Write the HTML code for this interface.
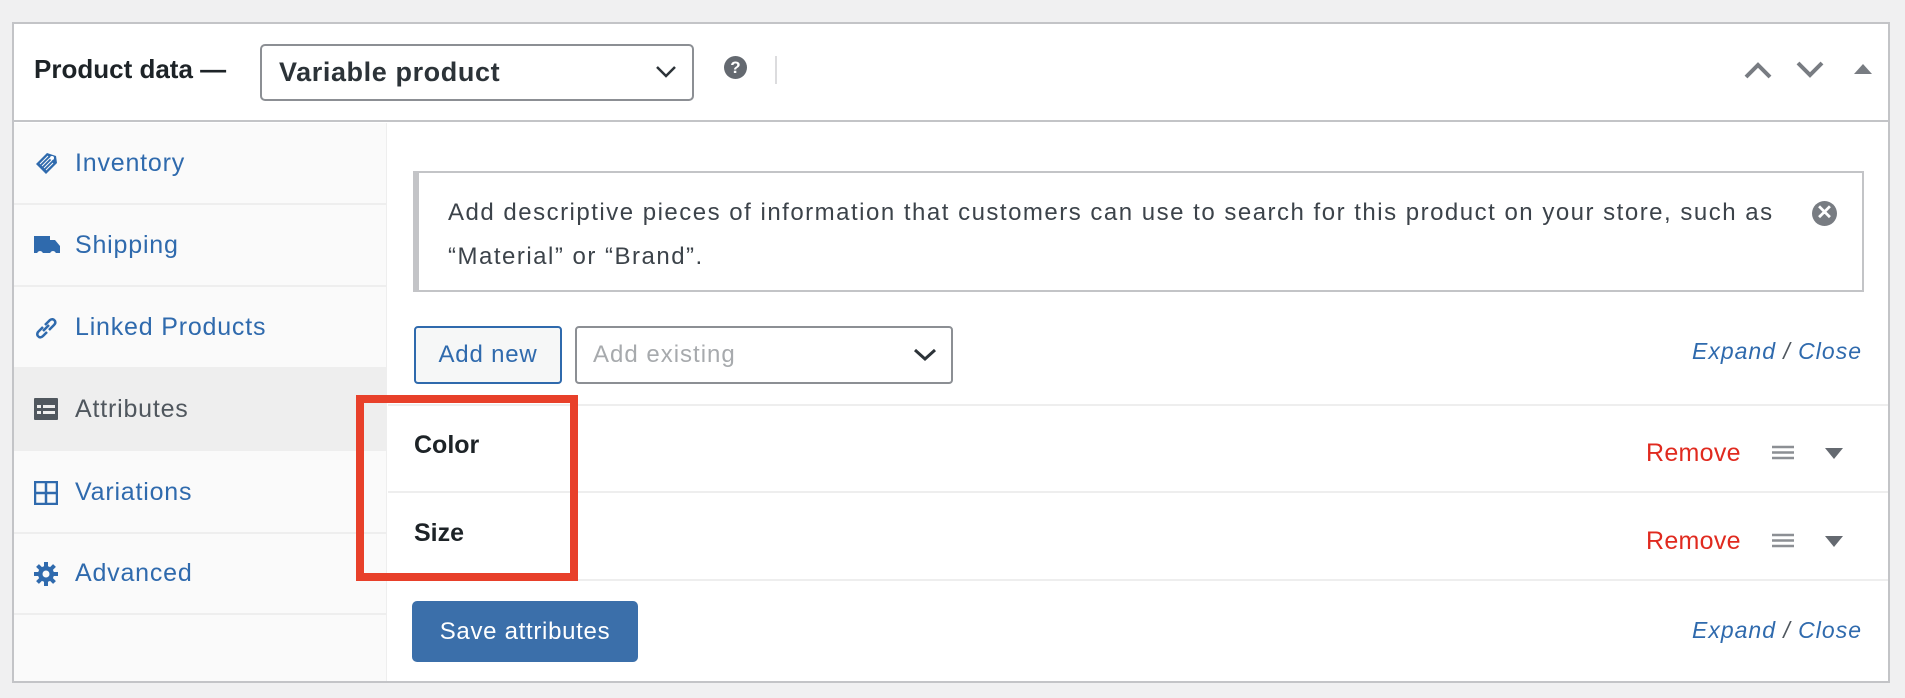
<!DOCTYPE html>
<html><head><meta charset="utf-8"><style>
*{box-sizing:border-box;margin:0;padding:0}
body{width:1905px;height:698px;background:#f0f0f1;font-family:"Liberation Sans",sans-serif;position:relative;overflow:hidden}
.abs{position:absolute}
.panel{left:12px;top:22px;width:1878px;height:661px;background:#fff;border:2px solid #c3c4c7}
.hdr{left:12px;top:22px;width:1878px;height:100px;border-bottom:2px solid #c3c4c7}
.side{left:14px;top:123px;width:373px;height:558px;background:#fafafa;border-right:1px solid #eee}
.row{position:absolute;left:0;width:373px;height:82px;border-bottom:2px solid #eee;color:#2f6aad;font-size:25px;letter-spacing:0.8px}
.row span{position:absolute;left:61px;top:26px}
.row svg{position:absolute;left:20px;top:29px}
.exp{font-style:italic;font-size:23px;color:#2f6aad;letter-spacing:1px}
.exp i{color:#50575e}
.rem{color:#e02a1f;font-size:25px;letter-spacing:0.3px}
</style></head><body>
<div class="abs panel"></div>
<div class="abs hdr"></div>
<div class="abs" style="left:34px;top:54px;font-size:26px;font-weight:bold;color:#1d2327">Product data —</div>
<div class="abs" style="left:260px;top:44px;width:434px;height:57px;border:2px solid #8c8f94;border-radius:5px;background:#fff"></div>
<div class="abs" style="left:279px;top:57px;font-size:27px;font-weight:bold;color:#2c3338;letter-spacing:0.6px">Variable product</div>
<svg class="abs" style="left:655px;top:65px" width="22" height="14"><path d="M2 2 L11 11 L20 2" fill="none" stroke="#2c3338" stroke-width="2.5"/></svg>
<div class="abs" style="left:724px;top:56px;width:23px;height:23px;border-radius:50%;background:#646970;color:#fff;font-weight:bold;font-size:17px;text-align:center;line-height:23px">?</div>
<div class="abs" style="left:775px;top:56px;width:2px;height:28px;background:#dcdcde"></div>
<svg class="abs" style="left:1743px;top:60px" width="30" height="20"><path d="M3 17 L15 5 L27 17" fill="none" stroke="#787c82" stroke-width="4"/></svg>
<svg class="abs" style="left:1795px;top:60px" width="30" height="20"><path d="M3 3 L15 15 L27 3" fill="none" stroke="#787c82" stroke-width="4"/></svg>
<svg class="abs" style="left:1854px;top:63px" width="18" height="12"><path d="M0 11 L9 1 L18 11Z" fill="#787c82"/></svg>

<div class="abs side">
 <div class="row" style="top:0"><svg width="24" height="26" viewBox="0 0 24 26"><path d="M2 12 L13 1 L22 4 L23 11 L12 22Z" fill="#2f6aad"/><path d="M6 12 L14 4 M8 14 L16 6 M10 16 L18 8 M12 18 L19 11" stroke="#fafafa" stroke-width="1"/><circle cx="18" cy="6" r="2" fill="#fff"/></svg><span>Inventory</span></div>
 <div class="row" style="top:82px"><svg width="26" height="24" viewBox="0 0 26 24"><path d="M0 2 H16 V6 H21 L26 12 V19 H0Z" fill="#2f6aad"/><circle cx="6" cy="20" r="3" fill="#fafafa"/><circle cx="19" cy="20" r="3" fill="#fafafa"/></svg><span>Shipping</span></div>
 <div class="row" style="top:164px"><svg width="24" height="24" viewBox="0 0 24 24"><path d="M9 11 L4 16 Q2 19 5 21 Q7 22 9 20 L13 16 M11 9 L16 4 Q19 2 21 5 Q22 7 20 9 L15 14 M9 15 L15 9" fill="none" stroke="#2f6aad" stroke-width="2.5"/></svg><span>Linked Products</span></div>
 <div class="row" style="top:246px;background:#eee;color:#50575e"><svg width="24" height="22" viewBox="0 0 24 22"><rect x="0" y="0" width="24" height="22" rx="1" fill="#50575e"/><rect x="3" y="7" width="4" height="3" fill="#eee"/><rect x="9" y="7" width="12" height="3" fill="#eee"/><rect x="3" y="13" width="4" height="3" fill="#eee"/><rect x="9" y="13" width="12" height="3" fill="#eee"/></svg><span>Attributes</span></div>
 <div class="row" style="top:329px"><svg width="24" height="24" viewBox="0 0 24 24"><path d="M1 1H23V23H1Z M12 1V23 M1 12H23" fill="none" stroke="#2f6aad" stroke-width="2.5"/></svg><span>Variations</span></div>
 <div class="row" style="top:410px"><svg width="24" height="24" viewBox="0 0 24 24"><g fill="#2f6aad"><circle cx="12" cy="12" r="8"/><rect x="10" y="0" width="4" height="24"/><rect x="0" y="10" width="24" height="4"/><rect x="10" y="0" width="4" height="24" transform="rotate(45 12 12)"/><rect x="10" y="0" width="4" height="24" transform="rotate(-45 12 12)"/></g><circle cx="12" cy="12" r="3.5" fill="#fafafa"/></svg><span>Advanced</span></div>
</div>

<div class="abs" style="left:413px;top:171px;width:1451px;height:121px;border:2px solid #c3c4c7;border-left:6px solid #c3c4c7;background:#fff"></div>
<div class="abs" style="left:448px;top:191px;font-size:24px;letter-spacing:1.5px;line-height:44px;color:#3c434a;width:1360px;white-space:nowrap">Add descriptive pieces of information that customers can use to search for this product on your store, such as<br>“Material” or “Brand”.</div>
<div class="abs" style="left:1812px;top:201px;width:25px;height:25px;border-radius:50%;background:#787c82;color:#fff;font-weight:bold;font-size:20px;text-align:center;line-height:25px">✕</div>

<div class="abs" style="left:414px;top:326px;width:148px;height:58px;border:2px solid #2f6aad;border-radius:4px;background:#f6f7f7;color:#2f6aad;font-size:24px;letter-spacing:0.8px;text-align:center;line-height:54px">Add new</div>
<div class="abs" style="left:575px;top:326px;width:378px;height:58px;border:2px solid #8c8f94;border-radius:4px;background:#fff;color:#a7aaad;font-size:24px;letter-spacing:1px;padding-left:16px;line-height:54px">Add existing</div>
<svg class="abs" style="left:913px;top:348px" width="24" height="14"><path d="M2 2 L12 11 L22 2" fill="none" stroke="#2c3338" stroke-width="3"/></svg>
<div class="abs exp" style="left:1692px;top:338px">Expand <i>/</i> Close</div>

<div class="abs" style="left:388px;top:404px;width:1500px;height:2px;background:#eee"></div>
<div class="abs" style="left:388px;top:491px;width:1500px;height:2px;background:#eee"></div>
<div class="abs" style="left:388px;top:579px;width:1500px;height:2px;background:#eee"></div>
<div class="abs" style="left:414px;top:431px;font-size:25px;font-weight:bold;color:#1d2327">Color</div>
<div class="abs" style="left:414px;top:519px;font-size:25px;font-weight:bold;color:#1d2327">Size</div>
<div class="abs rem" style="left:1646px;top:439px">Remove</div>
<div class="abs rem" style="left:1646px;top:527px">Remove</div>
<svg class="abs" style="left:1772px;top:445px" width="22" height="16"><path d="M0 2H22M0 7.5H22M0 13H22" stroke="#8c8f94" stroke-width="2.5"/></svg>
<svg class="abs" style="left:1772px;top:533px" width="22" height="16"><path d="M0 2H22M0 7.5H22M0 13H22" stroke="#8c8f94" stroke-width="2.5"/></svg>
<svg class="abs" style="left:1825px;top:448px" width="18" height="11"><path d="M0 0H18L9 11Z" fill="#646970"/></svg>
<svg class="abs" style="left:1825px;top:536px" width="18" height="11"><path d="M0 0H18L9 11Z" fill="#646970"/></svg>

<div class="abs" style="left:412px;top:601px;width:226px;height:61px;border-radius:5px;background:#3b6faa;color:#fff;font-size:24px;letter-spacing:0.7px;text-align:center;line-height:61px">Save attributes</div>
<div class="abs exp" style="left:1692px;top:617px">Expand <i>/</i> Close</div>

<div class="abs" style="left:356px;top:395px;width:222px;height:186px;border:8px solid #e8402a"></div>
</body></html>
